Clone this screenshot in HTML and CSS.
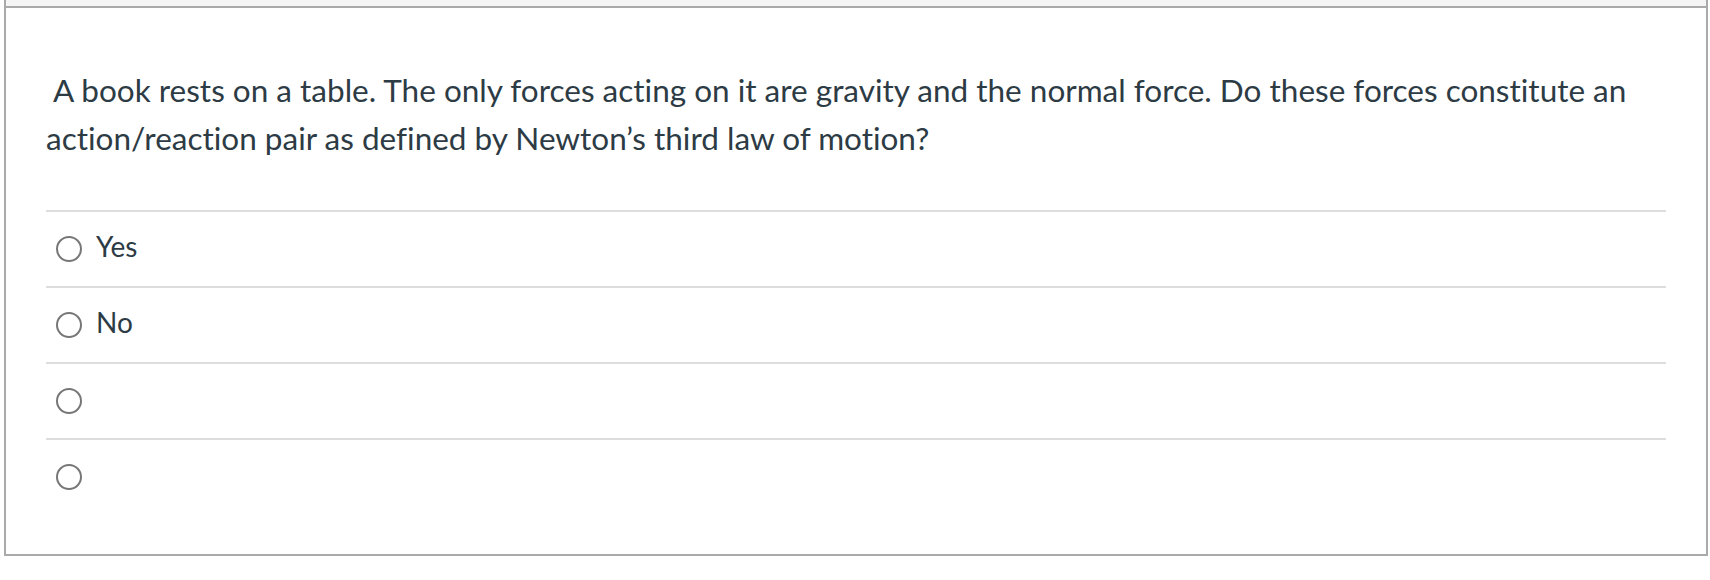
FILE: index.html
```html
<!DOCTYPE html>
<html lang="en">
<head>
<meta charset="utf-8">
<title>Quiz question</title>
<link rel="stylesheet" href="styles.css">
</head>
<body>
<div class="page">
  <div class="card">
    <div class="card-header"></div>
    <div class="card-body">
      <p class="question">&nbsp;A book rests on a table. The only forces acting on it are gravity and the normal force. Do these forces constitute an action/reaction pair as defined by Newton’s third law of motion?</p>
      <div class="answers">
        <label class="answer"><span class="radio"></span><span class="answer-text">Yes</span></label>
        <label class="answer"><span class="radio"></span><span class="answer-text">No</span></label>
        <label class="answer"><span class="radio"></span><span class="answer-text"></span></label>
        <label class="answer"><span class="radio"></span><span class="answer-text"></span></label>
      </div>
    </div>
  </div>
</div>
</body>
</html>
```
FILE: styles.css
```css
html, body {
  margin: 0;
  padding: 0;
  background: #ffffff;
}
body {
  font-family: Lato, "Open Sans", "Liberation Sans", sans-serif;
  color: #2d3b45;
  font-variant-ligatures: no-common-ligatures;
}
.page {
  padding: 0 2px 0 4px;
}
.card {
  border: 2px solid #aaaaaa;
  border-top: none;
}
.card-header {
  height: 6px;
  background: #f5f5f5;
  border-bottom: 2px solid #aaaaaa;
}
.card-body {
  padding: 58px 40px 40px;
}
.question {
  margin: 0 0 48px;
  font-size: 31.5px;
  line-height: 48px;
}
.answers {
  display: flex;
  flex-direction: column;
}
.answer {
  display: flex;
  align-items: center;
  gap: 14px;
  height: 74px;
  padding-left: 10px;
  border-top: 2px solid #dddddd;
}
.radio {
  box-sizing: border-box;
  width: 26px;
  height: 26px;
  border: 2px solid #777777;
  border-radius: 50%;
  flex: none;
}
.answer-text {
  font-size: 28px;
  line-height: 32px;
  padding-bottom: 6px;
}
```
